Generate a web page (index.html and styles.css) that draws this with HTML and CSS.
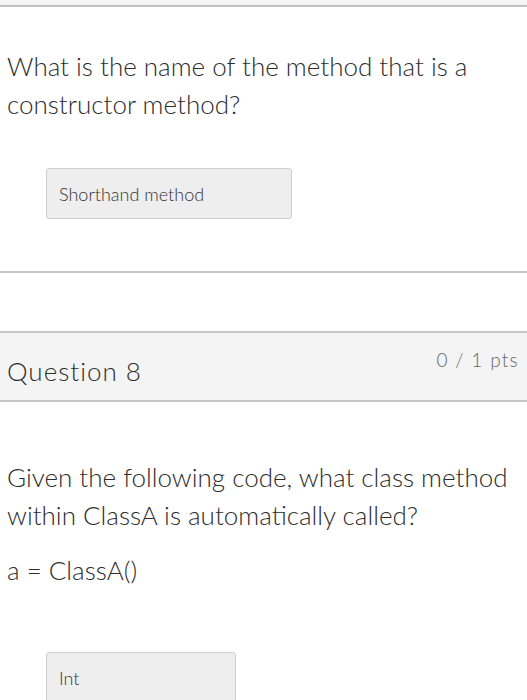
FILE: index.html
```html
<!DOCTYPE html>
<html>
<head>
<meta charset="utf-8">
<link rel="stylesheet" href="styles.css">
</head>
<body>
<div class="top-bar"></div>
<section class="question-body first">
  <p class="q-text">What is the name of the method that is a constructor method?</p>
  <div class="answer wide">Shorthand method</div>
</section>
<div class="divider"></div>
<header class="q-header">
  <h2 class="q-title">Question 8</h2>
  <span class="q-pts">0 / 1 pts</span>
</header>
<section class="question-body second">
  <p class="q-text">Given the following code, what class method within ClassA is automatically called?</p>
  <p class="q-text code">a = ClassA()</p>
  <div class="answer narrow">Int</div>
</section>
</body>
</html>
```

FILE: styles.css
```css
html, body {
  margin: 0;
  padding: 0;
  background: #fff;
}
body {
  font-family: Lato, "Open Sans", sans-serif;
  font-weight: 300;
  color: #2d2d2d;
  width: 527px;
  overflow: hidden;
}
.top-bar {
  height: 5px;
  background: #f5f5f5;
  border-bottom: 2px solid #c0c0c0;
}
.question-body {
  padding: 0 7px;
}
.question-body.first {
  padding-top: 40px;
  padding-bottom: 52px;
}
.question-body.second {
  padding-top: 56px;
}
.q-text {
  margin: 0;
  font-size: 26px;
  line-height: 38px;
  font-weight: 300;
}
.q-text.code {
  margin-top: 17px;
}
.answer {
  margin-left: 39px;
  margin-top: 45px;
  height: 49px;
  line-height: 50px;
  padding: 0 12px;
  background: #eeeeee;
  border: 1px solid #cfcfcf;
  border-radius: 3px;
  font-size: 18px;
  font-weight: 300;
  color: #333;
  box-sizing: content-box;
}
.answer.wide {
  width: 220px;
}
.answer.narrow {
  width: 164px;
  margin-top: 63px;
}
.divider {
  height: 0;
  border-top: 2px solid #c6c6c6;
  margin-bottom: 58px;
}
.q-header {
  display: flex;
  justify-content: space-between;
  align-items: flex-start;
  background: #f4f4f4;
  border-top: 2px solid #c6c6c6;
  border-bottom: 2px solid #c6c6c6;
  padding: 0 8px 10px 7px;
}
.q-title {
  margin: 0;
  padding-top: 19px;
  font-size: 26px;
  line-height: 38px;
  letter-spacing: 1px;
  font-weight: 300;
}
.q-pts {
  padding-top: 15px;
  font-size: 19px;
  line-height: 24px;
  letter-spacing: 1.3px;
  font-weight: 300;
  color: #666;
}
```
